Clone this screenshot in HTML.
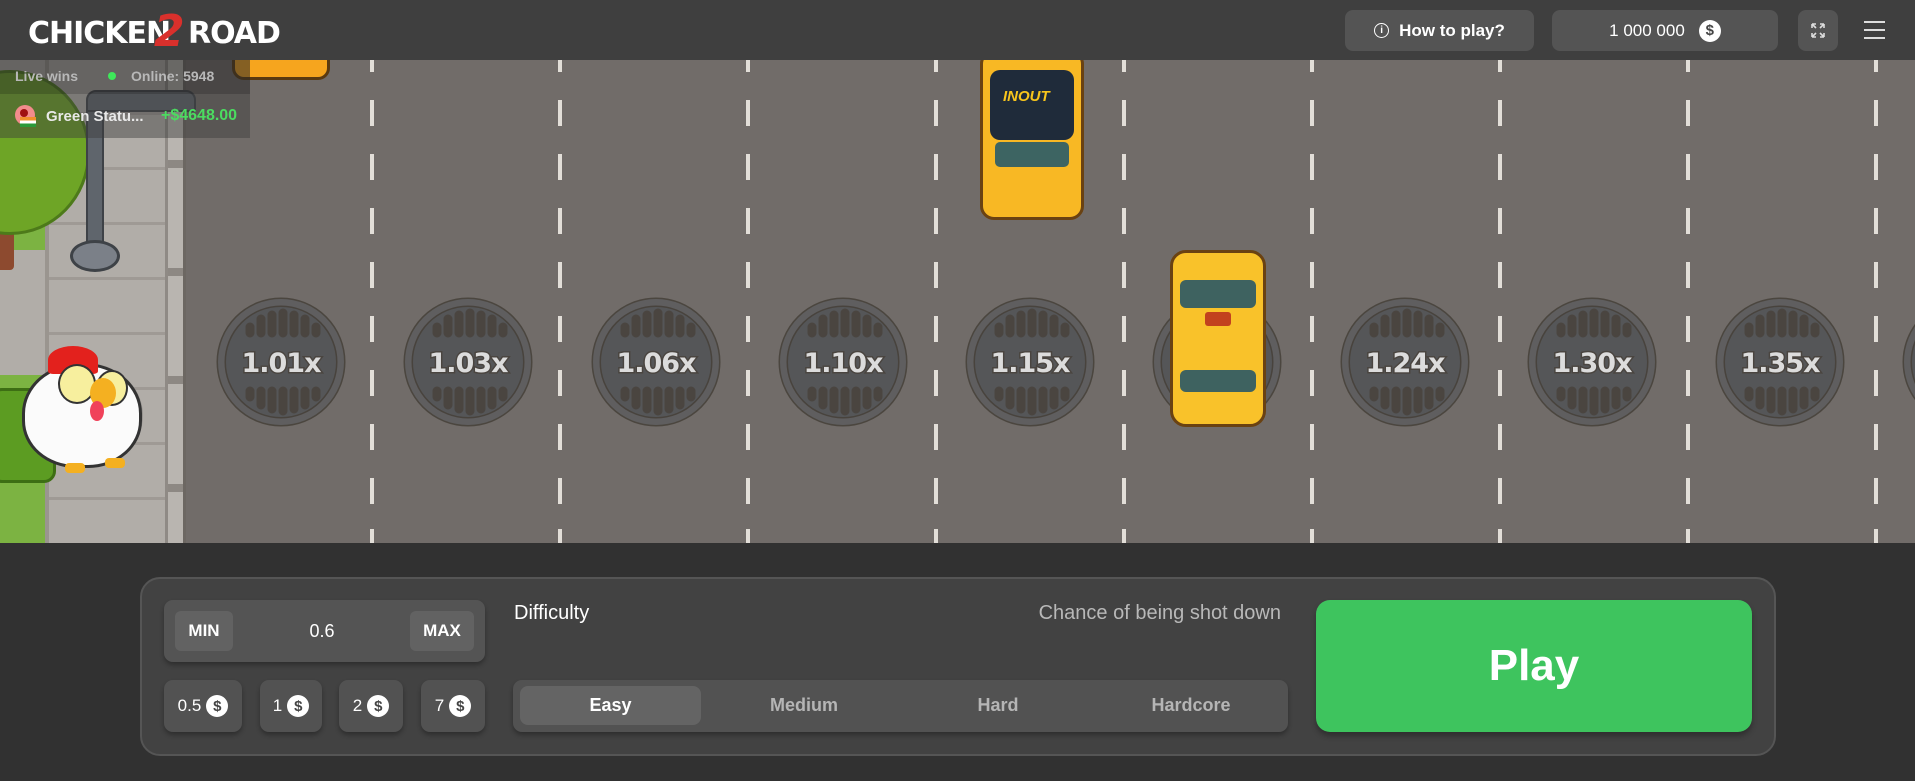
<!DOCTYPE html>
<html><head><meta charset="utf-8"><style>
*{margin:0;padding:0;box-sizing:border-box}
body{width:1915px;height:781px;overflow:hidden;background:#313131;font-family:"Liberation Sans",sans-serif;position:relative}
.a{position:absolute}
.hdr{left:0;top:0;width:1915px;height:60px;background:#3f3f3f;z-index:5}
.road{left:0;top:60px;width:1915px;height:483px;background:#716c69;overflow:hidden}
.dash{position:absolute;top:0;width:4px;height:483px;background:repeating-linear-gradient(to bottom,#e2ded8 0,#e2ded8 26px,transparent 26px,transparent 54px);background-position:0 -14px}
.btn{background:#545454;border-radius:8px}
.chip{position:absolute;top:680px;height:52px;background:#525252;border-radius:9px;color:#fff;font-size:17px;display:flex;align-items:center;justify-content:center;gap:5px;box-shadow:0 3px 5px rgba(0,0,0,.3)}
.coin{width:22px;height:22px;border-radius:50%;background:#fff;color:#444;font-size:15px;font-weight:bold;display:flex;align-items:center;justify-content:center}
.tab{position:absolute;top:686px;height:39px;color:#b5b5b5;font-size:18px;font-weight:bold;display:flex;align-items:center;justify-content:center}
</style></head><body>

<div class="a road">
  <div class="a" style="left:0;top:0;width:186px;height:483px;background:#b1ada8"></div>
  <div class="a" style="left:45px;top:0;width:4px;height:483px;background:#9a958f"></div>
  <div class="a" style="left:165px;top:0;width:21px;height:483px;background:repeating-linear-gradient(to bottom,#b9b5b0 0,#b9b5b0 100px,#8d8883 100px,#8d8883 108px);border-left:3px solid #8f8a85;border-right:3px solid #6c6762"></div>
  <div class="a" style="left:49px;top:0;width:116px;height:483px;background:repeating-linear-gradient(to bottom,transparent 0,transparent 52px,#9f9a95 52px,#9f9a95 55px)"></div>
  <div class="a" style="left:0;top:150px;width:45px;height:40px;background:#7cb342"></div>
  <div class="a" style="left:0;top:315px;width:45px;height:168px;background:#7cb342"></div>
  <div class="a" style="left:-10px;top:150px;width:24px;height:60px;background:#8d4a2f;border-radius:4px"></div>
  <div class="a" style="left:-70px;top:10px;width:160px;height:165px;border-radius:50%;background:#6ea526;border:3px solid #4d7a1a"></div>
  <div class="a" style="left:-10px;top:328px;width:66px;height:95px;background:#5c9c22;border-radius:12px;border:3px solid #3d6e14"></div>
  <div class="a" style="left:86px;top:42px;width:18px;height:155px;background:#5f656c;border:2px solid #3e4247"></div>
  <div class="a" style="left:86px;top:30px;width:110px;height:22px;background:#5f656c;border:2px solid #3e4247;border-radius:10px 10px 0 0"></div>
  <div class="a" style="left:70px;top:180px;width:50px;height:32px;background:#7b8088;border:3px solid #3e4247;border-radius:50%"></div>
  <div class="a" style="left:28px;top:303px;width:115px;height:105px;background:rgba(0,0,0,.15);border-radius:50%"></div>
  <div class="a" style="left:22px;top:303px;width:120px;height:105px;background:#fbfbfb;border:3px solid #333;border-radius:48% 48% 45% 45%"></div>
  <div class="a" style="left:48px;top:286px;width:50px;height:28px;background:#e3211d;border-radius:50% 50% 10% 10%"></div>
  <div class="a" style="left:58px;top:304px;width:38px;height:40px;background:#f7ef9e;border:2px solid #333;border-radius:50%"></div>
  <div class="a" style="left:96px;top:310px;width:32px;height:36px;background:#f7ef9e;border:2px solid #333;border-radius:50%"></div>
  <div class="a" style="left:90px;top:318px;width:26px;height:30px;background:#f4b021;border-radius:50%"></div>
  <div class="a" style="left:90px;top:341px;width:14px;height:20px;background:#f0425a;border-radius:50%"></div>
  <div class="a" style="left:65px;top:403px;width:20px;height:10px;background:#f4b021;border-radius:4px"></div>
  <div class="a" style="left:105px;top:398px;width:20px;height:10px;background:#f4b021;border-radius:4px"></div>

  <div class="dash" style="left:370px"></div><div class="dash" style="left:558px"></div>
  <div class="dash" style="left:746px"></div><div class="dash" style="left:934px"></div>
  <div class="dash" style="left:1122px"></div><div class="dash" style="left:1310px"></div>
  <div class="dash" style="left:1498px"></div><div class="dash" style="left:1686px"></div>
  <div class="dash" style="left:1874px"></div>

  <svg class="a" style="left:0;top:0" width="1915" height="483">
    <defs>
      <g id="m">
        <circle r="63" fill="#5f5e5f" stroke="#4b463f" stroke-width="3"/>
        <circle r="55" fill="#555658" stroke="#48433d" stroke-width="3"/>
        <g fill="#4a4540">
          <rect x="-34" y="-38" width="6" height="12" rx="3"/><rect x="-23" y="-46" width="6" height="20" rx="3"/><rect x="-12" y="-50" width="6" height="24" rx="3"/><rect x="-1" y="-52" width="6" height="26" rx="3"/><rect x="10" y="-50" width="6" height="24" rx="3"/><rect x="21" y="-46" width="6" height="20" rx="3"/><rect x="32" y="-38" width="6" height="12" rx="3"/>
          <rect x="-34" y="26" width="6" height="12" rx="3"/><rect x="-23" y="26" width="6" height="20" rx="3"/><rect x="-12" y="26" width="6" height="24" rx="3"/><rect x="-1" y="26" width="6" height="26" rx="3"/><rect x="10" y="26" width="6" height="24" rx="3"/><rect x="21" y="26" width="6" height="20" rx="3"/><rect x="32" y="26" width="6" height="12" rx="3"/>
        </g>
      </g>
    </defs>
    <g font-family="DejaVu Sans" font-weight="bold" font-size="27" text-anchor="middle" fill="#dcdcdc" stroke="#4a4540" stroke-width="3" paint-order="stroke" letter-spacing="-1">
      <use href="#m" x="281" y="302"/><text x="281" y="312">1.01x</text>
      <use href="#m" x="468" y="302"/><text x="468" y="312">1.03x</text>
      <use href="#m" x="656" y="302"/><text x="656" y="312">1.06x</text>
      <use href="#m" x="843" y="302"/><text x="843" y="312">1.10x</text>
      <use href="#m" x="1030" y="302"/><text x="1030" y="312">1.15x</text>
      <use href="#m" x="1217" y="302"/>
      <use href="#m" x="1405" y="302"/><text x="1405" y="312">1.24x</text>
      <use href="#m" x="1592" y="302"/><text x="1592" y="312">1.30x</text>
      <use href="#m" x="1780" y="302"/><text x="1780" y="312">1.35x</text>
      <use href="#m" x="1967" y="302"/>
    </g>
  </svg>

  <div class="a" style="left:232px;top:-20px;width:98px;height:40px;background:#f6a51e;border:3px solid #5a3a10;border-radius:0 0 12px 12px"></div>
  <div class="a" style="left:980px;top:-10px;width:104px;height:170px;background:#f8b824;border:3px solid #6a4212;border-radius:14px"></div>
  <div class="a" style="left:990px;top:10px;width:84px;height:70px;background:#1f2b3a;border-radius:10px"></div>
  <div class="a" style="left:1003px;top:28px;font:bold italic 15px 'Liberation Sans',sans-serif;color:#f8c51c">INOUT</div>
  <div class="a" style="left:995px;top:82px;width:74px;height:25px;background:#3d6462;border-radius:5px"></div>
  <div class="a" style="left:1170px;top:190px;width:96px;height:177px;background:#f9c22a;border:3px solid #6a4212;border-radius:16px"></div>
  <div class="a" style="left:1180px;top:220px;width:76px;height:28px;background:#3e6260;border-radius:6px"></div>
  <div class="a" style="left:1180px;top:310px;width:76px;height:22px;background:#3e6260;border-radius:6px"></div>
  <div class="a" style="left:1205px;top:252px;width:26px;height:14px;background:#c2411e;border-radius:3px"></div>
</div>

<div class="a" style="left:0;top:60px;width:250px;height:34px;background:rgba(40,40,40,.55);z-index:3"></div>
<div class="a" style="left:0;top:94px;width:250px;height:44px;background:rgba(60,60,60,.45);z-index:3"></div>
<div class="a" style="left:15px;top:68px;font-size:14px;font-weight:bold;color:#b8b8b8;z-index:4">Live wins</div>
<div class="a" style="left:108px;top:72px;width:8px;height:8px;border-radius:50%;background:#3ee85a;z-index:4"></div>
<div class="a" style="left:131px;top:68px;font-size:14px;font-weight:bold;color:#b8b8b8;z-index:4">Online: 5948</div>
<div class="a" style="left:15px;top:105px;width:20px;height:20px;border-radius:50%;background:#f28c8c;z-index:4"></div>
<div class="a" style="left:20px;top:109px;width:8px;height:8px;border-radius:50%;background:#a01010;z-index:4"></div>
<div class="a" style="left:20px;top:117px;width:16px;height:10px;background:linear-gradient(#f0902c 33%,#fff 33%,#fff 66%,#2a9a3a 66%);z-index:4"></div>
<div class="a" style="left:46px;top:108px;font-size:15px;font-weight:bold;color:#e8e8e8;z-index:4">Green Statu...</div>
<div class="a" style="left:161px;top:107px;font-size:16px;font-weight:bold;color:#4bdc60;z-index:4">+$4648.00</div>

<div class="a hdr">
  <div class="a" style="left:28px;top:16px;font-size:30px;font-weight:900;color:#fff;letter-spacing:-1px;font-family:'DejaVu Sans','Liberation Sans',sans-serif">CHICKEN</div>
  <div class="a" style="left:154px;top:6px;font-size:44px;font-weight:900;color:#d9302c;font-style:italic;font-family:'DejaVu Sans',sans-serif">2</div>
  <div class="a" style="left:188px;top:16px;font-size:30px;font-weight:900;color:#fff;letter-spacing:-1px;font-family:'DejaVu Sans','Liberation Sans',sans-serif">ROAD</div>
  <div class="a btn" style="left:1345px;top:10px;width:189px;height:41px;color:#fff;font-size:17px;font-weight:bold;display:flex;align-items:center;justify-content:center;gap:10px">
    <span style="width:15px;height:15px;border:1.6px solid #fff;border-radius:50%;font-size:10px;display:flex;align-items:center;justify-content:center">i</span>How to play?</div>
  <div class="a btn" style="left:1552px;top:10px;width:226px;height:41px;color:#fff;font-size:17px;display:flex;align-items:center;justify-content:center;gap:14px">1 000 000 <span class="coin" style="color:#444">$</span></div>
  <div class="a btn" style="left:1798px;top:10px;width:40px;height:41px">
    <svg width="40" height="41" viewBox="0 0 40 41" fill="none" stroke="#ddd" stroke-width="1.6"><path d="M14 14h4M14 14v4M14 14l4 4M26 14h-4M26 14v4M26 14l-4 4M14 27h4M14 27v-4M14 27l4-4M26 27h-4M26 27v-4M26 27l-4-4"/></svg>
  </div>
  <div class="a" style="left:1864px;top:21px;width:21px;height:2px;background:#ddd;box-shadow:0 8px 0 #ddd,0 16px 0 #ddd"></div>
</div>

<div class="a" style="left:140px;top:577px;width:1636px;height:179px;background:#424242;border:2px solid #555;border-radius:20px"></div>
<div class="a" style="left:164px;top:600px;width:321px;height:62px;background:#545454;border-radius:9px;box-shadow:0 3px 5px rgba(0,0,0,.3)"></div>
<div class="a" style="left:175px;top:611px;width:58px;height:40px;background:#626262;border-radius:6px;color:#fff;font-size:17px;font-weight:bold;display:flex;align-items:center;justify-content:center">MIN</div>
<div class="a" style="left:410px;top:611px;width:64px;height:40px;background:#626262;border-radius:6px;color:#fff;font-size:17px;font-weight:bold;display:flex;align-items:center;justify-content:center">MAX</div>
<div class="a" style="left:292px;top:621px;width:60px;text-align:center;color:#fff;font-size:18px">0.6</div>
<div class="chip" style="left:164px;width:78px">0.5<span class="coin">$</span></div>
<div class="chip" style="left:260px;width:62px">1<span class="coin">$</span></div>
<div class="chip" style="left:339px;width:64px">2<span class="coin">$</span></div>
<div class="chip" style="left:421px;width:64px">7<span class="coin">$</span></div>
<div class="a" style="left:514px;top:602px;color:#fff;font-size:20px">Difficulty</div>
<div class="a" style="left:981px;top:602px;width:300px;text-align:right;color:#b8b8b8;font-size:20px">Chance of being shot down</div>
<div class="a" style="left:513px;top:680px;width:775px;height:52px;background:#525252;border-radius:9px;box-shadow:0 3px 5px rgba(0,0,0,.3)"></div>
<div class="a" style="left:520px;top:686px;width:181px;height:39px;background:#646464;border-radius:8px"></div>
<div class="tab" style="left:520px;width:181px;color:#fff">Easy</div>
<div class="tab" style="left:714px;width:180px">Medium</div>
<div class="tab" style="left:908px;width:180px">Hard</div>
<div class="tab" style="left:1101px;width:180px">Hardcore</div>
<div class="a" style="left:1316px;top:600px;width:436px;height:132px;background:#3ec45e;border-radius:14px;box-shadow:0 4px 6px rgba(0,0,0,.3);color:#fff;font-size:44px;font-weight:bold;display:flex;align-items:center;justify-content:center">Play</div>
</body></html>
